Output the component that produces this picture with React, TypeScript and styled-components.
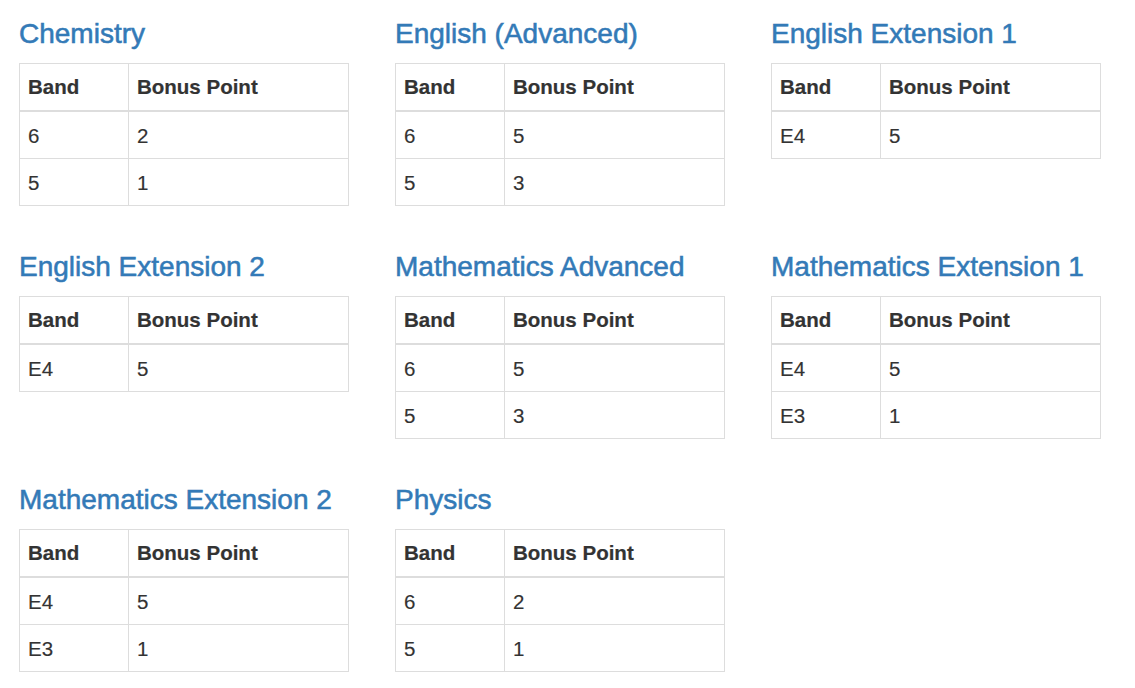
import React from "react";
import styled, { createGlobalStyle } from "styled-components";

const GlobalStyle = createGlobalStyle`
  html, body {
    margin: 0;
    padding: 0;
    background: #ffffff;
  }
  body {
    font-family: "Liberation Sans", Arial, Helvetica, sans-serif;
    color: #333333;
  }
`;

const Page = styled.div`
  padding: 18px 0 0 19px;
  display: grid;
  grid-template-columns: repeat(3, 330px);
  column-gap: 46px;
  row-gap: 45px;
  align-items: start;
`;

const Section = styled.section`
  display: flex;
  flex-direction: column;
`;

const Heading = styled.h3`
  margin: 0 0 13px 0;
  font-size: 28px;
  line-height: 32px;
  font-weight: 400;
  color: #337ab7;
  -webkit-text-stroke: 0.55px #337ab7;
`;

const Table = styled.table`
  width: 330px;
  border-collapse: collapse;
  border-spacing: 0;
  border: 1px solid #dddddd;
  table-layout: fixed;
  font-size: 20.5px;
`;

const HeadCell = styled.th<{ $first?: boolean }>`
  width: ${(p) => (p.$first ? "91px" : "auto")};
  padding: 11px 9px 12px 8px;
  line-height: 23px;
  text-align: left;
  font-weight: 700;
  color: #333333;
  -webkit-text-stroke: 0.2px #333333;
  border: 1px solid #dddddd;
  border-bottom: 2px solid #dddddd;
`;

const Cell = styled.td`
  padding: 12px 9px 11px 8px;
  line-height: 23px;
  text-align: left;
  color: #333333;
  -webkit-text-stroke: 0.15px #333333;
  border: 1px solid #dddddd;
`;

type Row = [string, string];

const data: { title: string; rows: Row[] }[] = [
  { title: "Chemistry", rows: [["6", "2"], ["5", "1"]] },
  { title: "English (Advanced)", rows: [["6", "5"], ["5", "3"]] },
  { title: "English Extension 1", rows: [["E4", "5"]] },
  { title: "English Extension 2", rows: [["E4", "5"]] },
  { title: "Mathematics Advanced", rows: [["6", "5"], ["5", "3"]] },
  { title: "Mathematics Extension 1", rows: [["E4", "5"], ["E3", "1"]] },
  { title: "Mathematics Extension 2", rows: [["E4", "5"], ["E3", "1"]] },
  { title: "Physics", rows: [["6", "2"], ["5", "1"]] },
];

export default function App() {
  return (
    <>
      <GlobalStyle />
      <Page>
        {data.map((s) => (
          <Section key={s.title}>
            <Heading>{s.title}</Heading>
            <Table>
              <thead>
                <tr>
                  <HeadCell $first>Band</HeadCell>
                  <HeadCell>Bonus Point</HeadCell>
                </tr>
              </thead>
              <tbody>
                {s.rows.map((r, i) => (
                  <tr key={i}>
                    <Cell>{r[0]}</Cell>
                    <Cell>{r[1]}</Cell>
                  </tr>
                ))}
              </tbody>
            </Table>
          </Section>
        ))}
      </Page>
    </>
  );
}
